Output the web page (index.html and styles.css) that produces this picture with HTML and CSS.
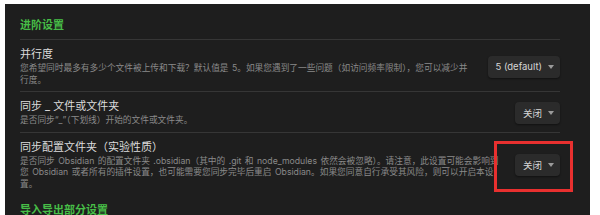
FILE: index.html
```html
<!DOCTYPE html>
<html lang="zh-CN">
<head>
<meta charset="utf-8">
<title>进阶设置</title>
<link rel="stylesheet" href="styles.css">
</head>
<body>
<div class="panel">
  <div class="heading">进阶设置</div>

  <div class="item">
    <div class="info">
      <div class="name">并行度</div>
      <div class="desc">您希望同时最多有多少个文件被上传和下载？默认值是 5。如果您遇到了一些问题（如访问频率限制），您可以减少并行度。</div>
    </div>
    <div class="control">
      <div class="dropdown"><span>5 (default)</span><span class="caret"></span></div>
    </div>
  </div>

  <div class="item">
    <div class="info">
      <div class="name">同步 _ 文件或文件夹</div>
      <div class="desc">是否同步“_”（下划线）开始的文件或文件夹。</div>
    </div>
    <div class="control">
      <div class="dropdown"><span>关闭</span><span class="caret"></span></div>
    </div>
  </div>

  <div class="item">
    <div class="info">
      <div class="name">同步配置文件夹（实验性质）</div>
      <div class="desc">是否同步 Obsidian 的配置文件夹 .obsidian（其中的 .git 和 node_modules 依然会被忽略）。请注意，此设置可能会影响到您 Obsidian 或者所有的插件设置，也可能需要您同步完毕后重启 Obsidian。如果您同意自行承受其风险，则可以开启本设置。</div>
    </div>
    <div class="control">
      <div class="dropdown"><span>关闭</span><span class="caret"></span></div>
      <div class="highlight"></div>
    </div>
  </div>

  <div class="heading heading-next">导入导出部分设置</div>
</div>
</body>
</html>
```

FILE: styles.css
```css
html, body {
  margin: 0;
  padding: 0;
  background: #ffffff;
}

body {
  font-family: Inter, "Noto Sans CJK SC", sans-serif;
  overflow: hidden;
}

.panel {
  margin: 4px 10px 0 5px;
  height: 211px;
  box-sizing: border-box;
  background: #1e1e1e;
  padding: 6px 30px 0 15px;
  overflow: hidden;
}

.heading {
  color: #47bd47;
  font-size: 11px;
  font-weight: 700;
  line-height: 14px;
  padding: 8px 0 7px;
  border-bottom: 1px solid #363636;
}

.heading-next {
  border-bottom: none;
  padding-top: 8px;
}

.item {
  display: flex;
  align-items: center;
  padding: 7px 0 5px;
  border-bottom: 1px solid #363636;
}

.item:nth-last-child(2) {
  border-bottom: none;
}

.info {
  flex: 1 1 auto;
  margin-right: 13px;
}

.name {
  color: #dcdcdc;
  font-size: 11px;
  line-height: 14px;
}

.desc {
  color: #8a8a8a;
  font-size: 8.7px;
  line-height: 11.5px;
  word-spacing: 1px;
  margin-top: 2px;
}

.control {
  position: relative;
  flex: 0 0 auto;
}

.dropdown {
  display: flex;
  align-items: center;
  gap: 6px;
  height: 22px;
  padding: 0 6px 0 8px;
  background: #2b2b2b;
  border-radius: 4px;
  box-shadow: 0 1px 2px rgba(0, 0, 0, 0.45);
  color: #d6d6d6;
  font-size: 9.5px;
}

.caret {
  width: 0;
  height: 0;
  border-left: 3.5px solid transparent;
  border-right: 3.5px solid transparent;
  border-top: 4px solid #9a9a9a;
}

.highlight {
  position: absolute;
  left: -21px;
  right: -13px;
  top: -13px;
  bottom: -16px;
  border: 3px solid #e8302f;
}
```
